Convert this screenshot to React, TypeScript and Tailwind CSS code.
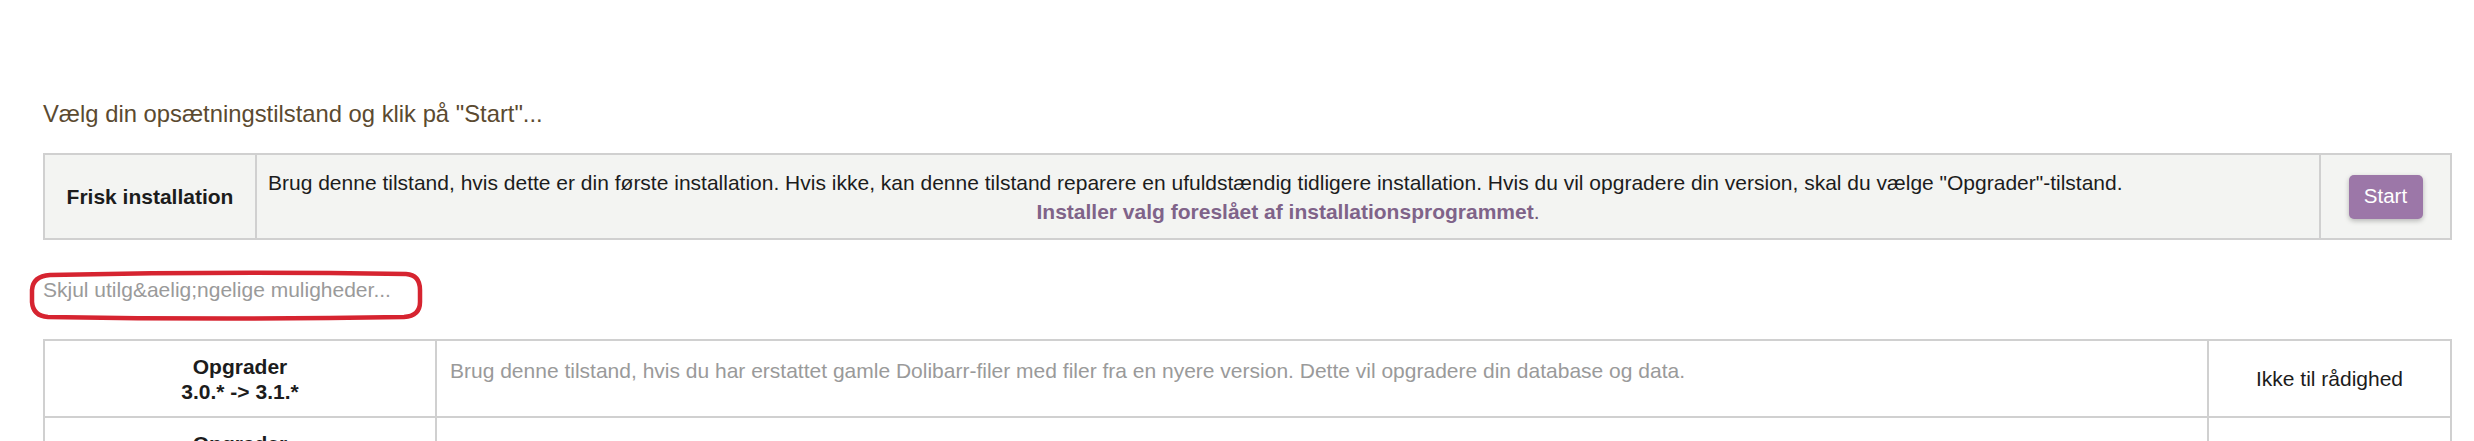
import React from "react";

function UpgradeRow({ from, to, last }: { from: string; to: string; last?: boolean }) {
  return (
    <div className="flex border-b-2 border-[#d0d0d0] h-[77px]">
      <div className="w-[392px] shrink-0 border-r-2 border-[#d0d0d0] flex flex-col items-center justify-center text-center font-bold text-[#1c1c1c] leading-[25px]">
        <div>Opgrader</div>
        <div>
          {from} -&gt; {to}
        </div>
      </div>
      <div
        className={
          last
            ? "flex-1 border-r-2 border-[#d0d0d0] flex items-center pl-[13px] pt-[20px] text-[#9a9a9a] leading-[25px]"
            : "flex-1 border-r-2 border-[#d0d0d0] flex items-center pl-[13px] pb-[17px] text-[#9a9a9a] leading-[25px]"
        }
      >
        Brug denne tilstand, hvis du har erstattet gamle Dolibarr-filer med filer fra en nyere version. Dette vil opgradere din database og data.
      </div>
      <div className="w-[241px] shrink-0 flex items-center justify-center text-[#1c1c1c] leading-[25px]">
        Ikke til rådighed
      </div>
    </div>
  );
}

export default function App() {
  return (
    <div className="w-[2474px] h-[441px] overflow-hidden bg-white font-['Liberation_Sans',Arial,sans-serif] text-[21px] pl-[43px] pr-[22px] pt-[100px]">
      <div className="text-[23.8px] leading-[28px] text-[#5b4a30]">
        Vælg din opsætningstilstand og klik på "Start"...
      </div>

      <div className="mt-[25px] flex border-2 border-[#d0d0d0] bg-[#f3f4f2] h-[87px]">
        <div className="w-[212px] shrink-0 border-r-2 border-[#d0d0d0] flex items-center justify-center font-bold text-[#1c1c1c]">
          Frisk installation
        </div>
        <div className="flex-1 border-r-2 border-[#d0d0d0] flex flex-col justify-center pl-[11px] leading-[29px] text-[#1c1c1c]">
          <div>
            Brug denne tilstand, hvis dette er din første installation. Hvis ikke, kan denne tilstand reparere en ufuldstændig tidligere installation. Hvis du vil opgradere din version, skal du vælge "Opgrader"-tilstand.
          </div>
          <div className="text-center pr-[11px]">
            <span className="font-bold text-[#7f6389]">Installer valg foreslået af installationsprogrammet</span>
            <span className="text-[#6a5a70]">.</span>
          </div>
        </div>
        <div className="w-[129px] shrink-0 flex items-center justify-center">
          <button className="w-[74px] h-[44px] rounded-[5px] bg-[#9c77a8] text-white text-[20.5px] shadow-[0_2px_5px_rgba(0,0,0,0.25)]">
            Start
          </button>
        </div>
      </div>

      <div className="mt-[38px] relative w-fit leading-[24px] text-[#9a9a9a]">
        Skjul utilg&amp;aelig;ngelige muligheder...
        <svg
          className="absolute left-[-15px] top-[-8px] pointer-events-none"
          width="396"
          height="52"
          viewBox="0 0 396 52"
        >
          <path
            d="M 22 5 Q 200 1 378 4 Q 392 5 392 20 L 392 32 Q 392 46 376 47 Q 200 50 20 47 Q 5 46 4 32 L 4 20 Q 5 6 22 5 Z"
            fill="none"
            stroke="#d62430"
            strokeWidth="4.5"
          />
        </svg>
      </div>

      <div className="mt-[37px] border-t-2 border-x-2 border-[#d0d0d0]">
        <UpgradeRow from="3.0.*" to="3.1.*" />
        <UpgradeRow from="3.1.*" to="3.2.*" last />
      </div>
    </div>
  );
}
